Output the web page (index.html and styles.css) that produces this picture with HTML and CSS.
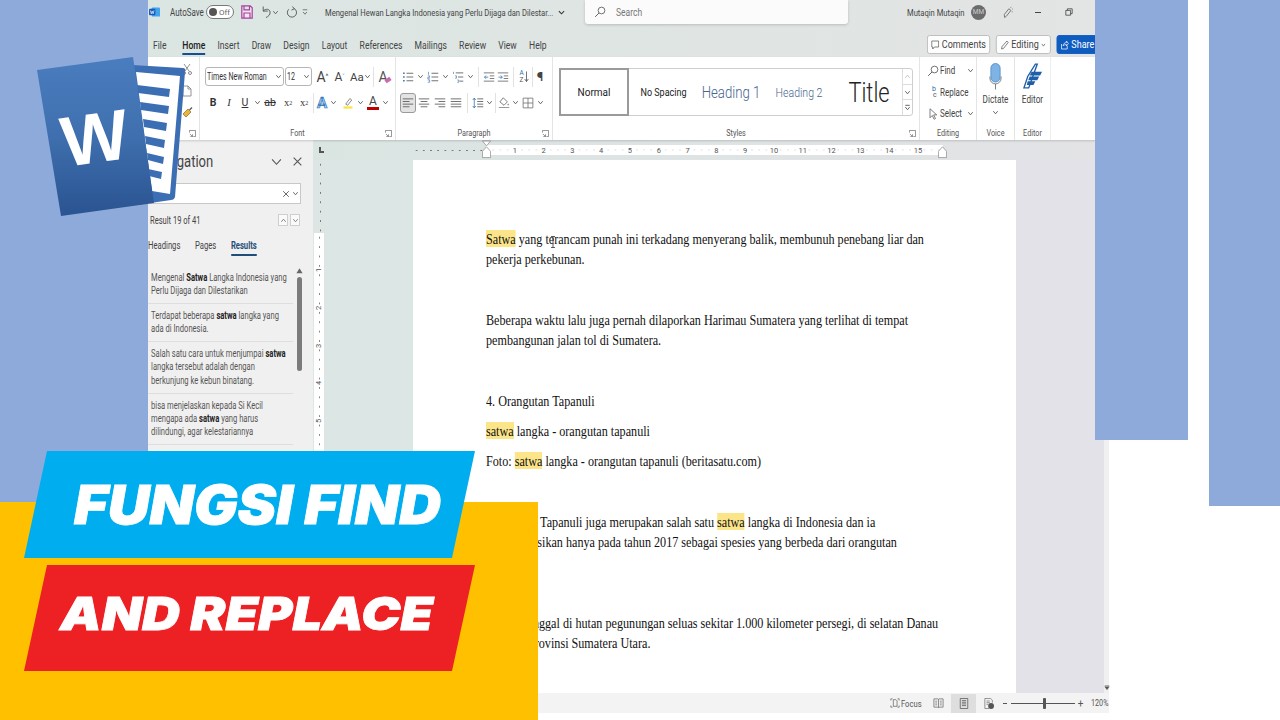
FILE: index.html
```html
<!DOCTYPE html>
<html lang="id">
<head>
    <meta charset="UTF-8">
    <meta name="viewport" content="width=device-width, initial-scale=1.0">
    <title>Fungsi Find and Replace</title>
    <link rel="stylesheet" href="styles.css">
</head>
<body>
<svg class="defs" width="0" height="0">
    <symbol id="i-chev" viewBox="0 0 8 8"><path d="M1.5 2.5 4 5.5l2.5-3" fill="none" stroke="#555" stroke-width="1"/></symbol>
    <symbol id="i-launch" viewBox="0 0 8 8"><path d="M.5 3V.5H7.5V7.5H5M1 4.5 4 7.500M4 5v2.500H1.500" fill="none" stroke="#666" stroke-width=".8"/></symbol>
    <symbol id="i-bullets" viewBox="0 0 16 16"><path d="M6 3h9M6 8h9M6 13h9" stroke="#555" stroke-width="1.100"/><path d="M1.500 3h2M1.500 8h2M1.500 13h2" stroke="#2b6cb0" stroke-width="2"/></symbol>
    <symbol id="i-numbers" viewBox="0 0 16 16"><path d="M6 3h9M6 8h9M6 13h9" stroke="#555" stroke-width="1.100"/><path d="M2 1v4M1 6.500h2.500v2H1v2h3M1 12h2.500v3H1" fill="none" stroke="#2b6cb0" stroke-width=".8"/></symbol>
    <symbol id="i-multi" viewBox="0 0 16 16"><path d="M5 2.500h10M8 8h7M10 13.500h5" stroke="#555" stroke-width="1.100"/><path d="M2 1v3M4 6.500h2v3H4M7 12h2v3H7" fill="none" stroke="#2b6cb0" stroke-width=".8"/></symbol>
    <symbol id="i-outdent" viewBox="0 0 16 16"><path d="M1 2.500h14M9 6.500h6M9 10h6M1 13.500h14" stroke="#555" stroke-width="1"/><path d="M7 8.200H2M4 6 2 8.200 4 10.400" fill="none" stroke="#2b6cb0" stroke-width="1"/></symbol>
    <symbol id="i-indent" viewBox="0 0 16 16"><path d="M1 2.500h14M9 6.500h6M9 10h6M1 13.500h14" stroke="#555" stroke-width="1"/><path d="M2 8.200h5M5 6l2 2.200-2 2.200" fill="none" stroke="#2b6cb0" stroke-width="1"/></symbol>
    <symbol id="i-left" viewBox="0 0 16 16"><path d="M1 2.500h14M1 6h9M1 9.500h14M1 13h9" stroke="#555" stroke-width="1.100"/></symbol>
    <symbol id="i-center" viewBox="0 0 16 16"><path d="M1 2.500h14M3.500 6h9M1 9.500h14M3.500 13h9" stroke="#555" stroke-width="1.100"/></symbol>
    <symbol id="i-right" viewBox="0 0 16 16"><path d="M1 2.500h14M6 6h9M1 9.500h14M6 13h9" stroke="#555" stroke-width="1.100"/></symbol>
    <symbol id="i-justify" viewBox="0 0 16 16"><path d="M1 2.500h14M1 6h14M1 9.500h14M1 13h14" stroke="#555" stroke-width="1.100"/></symbol>
    <symbol id="i-spacing" viewBox="0 0 16 16"><path d="M7 2.500h8M7 6h8M7 9.500h8M7 13h8" stroke="#555" stroke-width="1.100"/><path d="M3 1.500v13M1 4l2-2.500L5 4M1 12l2 2.500L5 12" fill="none" stroke="#2b6cb0" stroke-width="1"/></symbol>
    <symbol id="i-shade" viewBox="0 0 16 16"><path d="M7 1 12.500 6.500 8 11 2.500 6.500z" fill="none" stroke="#555" stroke-width="1"/><path d="M13.500 8.500c1 1.500 1 2.500 0 2.500s-1-1 0-2.500z" fill="#555"/><path d="M1 14h14" stroke="#999" stroke-width="1.400"/></symbol>
    <symbol id="i-borders" viewBox="0 0 16 16"><path d="M1.500 1.500h13v13h-13zM8 1.500v13M1.500 8h13" fill="none" stroke="#666" stroke-width="1"/></symbol>
    <symbol id="i-find" viewBox="0 0 16 16"><circle cx="10" cy="6" r="4.500" fill="none" stroke="#555" stroke-width="1.100"/><path d="M6.700 9.300 1.500 14.500" stroke="#555" stroke-width="1.200"/></symbol>
    <symbol id="i-select" viewBox="0 0 16 16"><path d="M4 1v12l3-3 2.500 5 1.800-1-2.500-4.800H13z" fill="none" stroke="#555" stroke-width="1"/></symbol>
</svg>

<div class="stage">
    <div class="word-window">
        <div class="titlebar">
            <svg class="mini-word" viewBox="0 0 12 12"><rect x="3" y="1" width="9" height="10" rx="1" fill="#41a5ee"/><rect x="0" y="2.500" width="7" height="7" rx="1" fill="#185abd"/><path d="M1.500 4.200 2.500 8l1-3 1 3 1-3.800" fill="none" stroke="#fff" stroke-width=".7"/></svg>
            <span class="tb-label">AutoSave</span>
            <span class="toggle"><i></i>Off</span>
            <svg class="tb-save" viewBox="0 0 12 14"><path d="M.8.800h8.400l2 2v10.400H.8zM3 .8v4h5.500v-4M3 13v-5h6v5" fill="#f4e3f0" stroke="#a7419a" stroke-width="1.200"/></svg>
            <svg class="tb-undo" viewBox="0 0 12 14"><path d="M3.500 1v5h5M3.500 6C6 3 10.500 3.500 11 7c.3 3-2 5-4.500 6" fill="none" stroke="#555" stroke-width="1"/></svg>
            <svg class="tb-chev"><use href="#i-chev"/></svg>
            <svg class="tb-redo" viewBox="0 0 12 14"><path d="M7 1 9 3.500 6 5M8.500 3A5 5 0 1 1 3 4" fill="none" stroke="#555" stroke-width="1"/></svg>
            <svg class="tb-qat" viewBox="0 0 8 10"><path d="M1 2h6M1.500 5 4 8l2.500-3" fill="none" stroke="#555" stroke-width="1"/></svg>
            <span class="doc-title">Mengenal Hewan Langka Indonesia yang Perlu Dijaga dan Dilestar...</span>
            <svg class="title-chev" viewBox="0 0 8 8"><path d="M1 2.500 4 5.500l3-3" fill="none" stroke="#333" stroke-width="1.200"/></svg>
            <div class="search-box">
                <svg class="search-ic" viewBox="0 0 16 16"><use href="#i-find"/></svg>
                <span>Search</span>
            </div>
            <span class="user-name">Mutaqin Mutaqin</span>
            <span class="avatar">MM</span>
            <svg class="tb-pen" viewBox="0 0 12 14"><path d="M2 13 1.500 9.500 7 2.500l2.500 2L4 11.500zM9 1l1-.5M11 3l.8-.5M10.500 6l1 .3" fill="none" stroke="#555" stroke-width=".9"/></svg>
            <span class="tb-min"></span>
            <svg class="tb-restore" viewBox="0 0 10 10"><path d="M1 3h6v6H1zM3 3V1h6v6H7" fill="none" stroke="#444" stroke-width="1"/></svg>
        </div>

        <div class="tabsbar">
            <div class="tab-list">
                <span class="tab tab-file">File</span>
                <span class="tab tab-active">Home</span>
                <span class="tab">Insert</span>
                <span class="tab">Draw</span>
                <span class="tab">Design</span>
                <span class="tab">Layout</span>
                <span class="tab">References</span>
                <span class="tab">Mailings</span>
                <span class="tab">Review</span>
                <span class="tab">View</span>
                <span class="tab">Help</span>
            </div>
            <div class="tab-actions">
                <span class="pill pill-comments">
                    <svg viewBox="0 0 10 10"><path d="M.8 1h8.400v6H4L2 9V7H.8z" fill="none" stroke="#555" stroke-width=".8"/></svg>Comments
                </span>
                <span class="pill pill-editing">
                    <svg viewBox="0 0 10 10"><path d="M1 9 1.500 6.500 7.500 1 9 2.500 3.200 8.500z" fill="none" stroke="#555" stroke-width=".8"/></svg>Editing<svg class="pill-chev"><use href="#i-chev"/></svg>
                </span>
                <span class="pill pill-share">
                    <svg viewBox="0 0 10 10"><path d="M1 4v5h7V6M3 6c0-2 2-3.500 4-3.500V1l2.500 2.500L7 6V4.500C5 4.500 4 5 3 6z" fill="none" stroke="#fff" stroke-width=".8"/></svg>Share
                </span>
            </div>
        </div>

        <div class="ribbon">
            <section class="group group-clipboard">
                <div class="clip-icons">
                    <svg viewBox="0 0 12 12"><path d="M3 1l5 7M9 1 4 8" stroke="#888" fill="none" stroke-width=".9"/><circle cx="3" cy="10" r="1.500" fill="none" stroke="#888"/><circle cx="9" cy="10" r="1.500" fill="none" stroke="#888"/></svg>
                    <svg viewBox="0 0 12 12"><path d="M2 1h5l3 3v7H2zM7 1v3h3" fill="none" stroke="#888" stroke-width=".9"/></svg>
                    <svg viewBox="0 0 12 12"><path d="M2 7 7 2l3 3-5 5z" fill="#e8b33f" stroke="#8a6a1f" stroke-width=".7"/><path d="M8.500 3 11 .5" stroke="#555" stroke-width="1.200"/></svg>
                </div>
                <svg class="launcher"><use href="#i-launch"/></svg>
            </section>

            <section class="group group-font">
                <div class="rows">
                    <div class="row">
                        <span class="combo combo-font"><span>Times New Roman</span><svg><use href="#i-chev"/></svg></span>
                        <span class="combo combo-size"><span>12</span><svg><use href="#i-chev"/></svg></span>
                        <span class="cell big-a cell-grow">A<sup>^</sup></span>
                        <span class="cell big-a small-a">A<sup>˅</sup></span>
                        <span class="cell case-a">Aa<svg class="chev-inline"><use href="#i-chev"/></svg></span>
                        <span class="v-sep"></span>
                        <span class="cell clear-a">A<i></i></span>
                    </div>
                    <div class="row">
                        <span class="cell fmt"><b>B</b></span>
                        <span class="cell fmt"><em>I</em></span>
                        <span class="cell fmt"><u>U</u></span>
                        <svg class="chev"><use href="#i-chev"/></svg>
                        <span class="cell fmt strike">ab</span>
                        <span class="cell fmt push">x<sub>2</sub></span>
                        <span class="cell fmt">x<sup>2</sup></span>
                        <span class="v-sep sep-tight"></span>
                        <span class="cell tight effect-a">A</span>
                        <svg class="chev"><use href="#i-chev"/></svg>
                        <span class="cell push">
                            <svg class="ic" viewBox="0 0 16 16"><path d="M5 9.500 10.500 2l2.500 2-5.500 7z" fill="none" stroke="#666" stroke-width="1"/><rect x="2" y="12.500" width="12" height="3" fill="#f5e642"/></svg>
                        </span>
                        <svg class="chev"><use href="#i-chev"/></svg>
                        <span class="cell color-a">A<i></i></span>
                        <svg class="chev"><use href="#i-chev"/></svg>
                    </div>
                </div>
                <div class="group-label">Font</div>
                <svg class="launcher"><use href="#i-launch"/></svg>
            </section>

            <section class="group group-para">
                <div class="rows">
                    <div class="row">
                        <span class="cell"><svg class="ic"><use href="#i-bullets"/></svg></span>
                        <svg class="chev"><use href="#i-chev"/></svg>
                        <span class="cell"><svg class="ic"><use href="#i-numbers"/></svg></span>
                        <svg class="chev"><use href="#i-chev"/></svg>
                        <span class="cell"><svg class="ic"><use href="#i-multi"/></svg></span>
                        <svg class="chev"><use href="#i-chev"/></svg>
                        <span class="v-sep"></span>
                        <span class="cell tight"><svg class="ic"><use href="#i-outdent"/></svg></span>
                        <span class="cell tight"><svg class="ic"><use href="#i-indent"/></svg></span>
                        <span class="v-sep"></span>
                        <span class="cell tight sort-ic"><span class="sort-az"><i>A</i><i>Z</i></span><svg viewBox="0 0 6 14"><path d="M3 1v12M.8 10 3 13l2.200-3" fill="none" stroke="#555" stroke-width="1"/></svg></span>
                        <span class="v-sep sep-tight"></span>
                        <span class="cell pilcrow">¶</span>
                    </div>
                    <div class="row">
                        <span class="cell cell-active"><svg class="ic"><use href="#i-left"/></svg></span>
                        <span class="cell"><svg class="ic"><use href="#i-center"/></svg></span>
                        <span class="cell"><svg class="ic"><use href="#i-right"/></svg></span>
                        <span class="cell"><svg class="ic"><use href="#i-justify"/></svg></span>
                        <span class="v-sep"></span>
                        <span class="cell tight"><svg class="ic"><use href="#i-spacing"/></svg></span>
                        <svg class="chev"><use href="#i-chev"/></svg>
                        <span class="v-sep sep-tight"></span>
                        <span class="cell tight"><svg class="ic"><use href="#i-shade"/></svg></span>
                        <svg class="chev"><use href="#i-chev"/></svg>
                        <span class="cell"><svg class="ic"><use href="#i-borders"/></svg></span>
                        <svg class="chev"><use href="#i-chev"/></svg>
                    </div>
                </div>
                <div class="group-label">Paragraph</div>
                <svg class="launcher"><use href="#i-launch"/></svg>
            </section>

            <section class="group group-styles">
                <div class="gallery">
                    <span class="style style-normal">Normal</span>
                    <span class="style style-nospace">No Spacing</span>
                    <span class="style style-h1">Heading 1</span>
                    <span class="style style-h2">Heading 2</span>
                    <span class="style style-title">Title</span>
                    <div class="gallery-arrows">
                        <span><svg viewBox="0 0 8 8"><path d="M1.500 5.500 4 2.500l2.500 3" fill="none" stroke="#bbb"/></svg></span>
                        <span><svg viewBox="0 0 8 8"><use href="#i-chev"/></svg></span>
                        <span><svg viewBox="0 0 8 8"><path d="M1.500 1.500h5M1.500 3.500 4 6.500l2.500-3" fill="none" stroke="#555"/></svg></span>
                    </div>
                </div>
                <div class="group-label">Styles</div>
                <svg class="launcher"><use href="#i-launch"/></svg>
            </section>

            <section class="group group-editing">
                <div class="edit-list">
                    <div class="edit-item"><svg class="ic"><use href="#i-find"/></svg><span>Find</span><svg class="chev edit-chev"><use href="#i-chev"/></svg></div>
                    <div class="edit-item"><span class="replace-ic"><i>b</i><i>c</i></span><span>Replace</span></div>
                    <div class="edit-item"><svg class="ic"><use href="#i-select"/></svg><span>Select</span><svg class="chev"><use href="#i-chev"/></svg></div>
                </div>
                <div class="group-label">Editing</div>
            </section>

            <section class="group group-voice">
                <svg class="mic" viewBox="0 0 14 28"><rect x="2" y="0" width="10" height="20" rx="5" fill="#7fb2e5" stroke="#3f85c8" stroke-width=".8"/><path d="M1 14v2a6 6 0 0 0 12 0v-2M7 22v6" fill="none" stroke="#777" stroke-width="1"/></svg>
                <div class="big-label">Dictate</div>
                <svg class="chev big-chev"><use href="#i-chev"/></svg>
                <div class="group-label">Voice</div>
            </section>

            <section class="group group-editor">
                <svg class="editor-ic" viewBox="0 0 22 28"><path d="M2 26 6 14 14 1h2L7 26z" fill="none" stroke="#1f5fa8" stroke-width="1.400"/><path d="M10 9h11l-2 4H8zM8 14h10l-2 4H6.500zM6 19h8l-2 4H5z" fill="#1f5fa8"/></svg>
                <div class="big-label">Editor</div>
                <div class="group-label">Editor</div>
            </section>
        </div>

        <div class="workspace">
            <aside class="nav-pane">
                <div class="nav-head">
                    <h2>Navigation</h2>
                    <svg viewBox="0 0 10 10"><path d="M1 3l4 4.500L9 3" fill="none" stroke="#555"/></svg>
                    <svg viewBox="0 0 10 10"><path d="M1.500 1.500l7 7M8.500 1.500l-7 7" fill="none" stroke="#555"/></svg>
                </div>
                <div class="nav-search">
                    <svg viewBox="0 0 10 10"><path d="M1.500 1.500l7 7M8.500 1.500l-7 7" fill="none" stroke="#444"/></svg>
                    <svg class="nav-search-chev"><use href="#i-chev"/></svg>
                </div>
                <div class="nav-count">
                    <span class="nav-count-text">Result 19 of 41</span>
                    <span class="nav-arrows">
                        <i><svg viewBox="0 0 8 8"><path d="M1.500 5.500 4 2.500l2.500 3" fill="none" stroke="#777"/></svg></i>
                        <i><svg viewBox="0 0 8 8"><path d="M1.500 2.500 4 5.500l2.500-3" fill="none" stroke="#777"/></svg></i>
                    </span>
                </div>
                <div class="nav-tabs">
                    <span>Headings</span>
                    <span>Pages</span>
                    <span class="nav-tab-on">Results</span>
                </div>
                <div class="nav-body">
                    <ul class="results">
                        <li>Mengenal <b>Satwa</b> Langka Indonesia yang<br>Perlu Dijaga dan Dilestarikan</li>
                        <li>Terdapat beberapa <b>satwa</b> langka yang<br>ada di Indonesia.</li>
                        <li>Salah satu cara untuk menjumpai <b>satwa</b><br>langka tersebut adalah dengan<br>berkunjung ke kebun binatang.</li>
                        <li>bisa menjelaskan kepada Si Kecil<br>mengapa ada <b>satwa</b> yang harus<br>dilindungi, agar kelestariannya</li>
                    </ul>
                    <div class="nav-scroll">
                        <svg viewBox="0 0 8 8"><path d="M4 1.500 7.500 7h-7z" fill="#666"/></svg>
                        <span></span>
                    </div>
                </div>
            </aside>

            <div class="doc-side">
                <div class="h-ruler">
                    <span class="ruler-corner"></span>
                    <div class="ruler-off"></div>
                    <div class="ruler-on">
                        <span class="ruler-half"></span>
                        <span>1</span><span>2</span><span>3</span><span>4</span><span>5</span><span>6</span><span>7</span><span>8</span>
                        <span>9</span><span>10</span><span>11</span><span>12</span><span>13</span><span>14</span><span>15</span>
                        <svg class="marker marker-left" viewBox="0 0 10 20"><path d="M.5.500h9L5 6zM5 7l4.500 5v7H.5v-7z" fill="#fff" stroke="#888" stroke-width=".8"/></svg>
                        <svg class="marker marker-right" viewBox="0 0 10 20"><path d="M5 7l4.500 5v7H.5v-7z" fill="#fff" stroke="#888" stroke-width=".8"/></svg>
                    </div>
                </div>
                <div class="doc-area">
                    <div class="v-ruler">
                        <div class="v-off"></div>
                        <div class="v-on">
                            <span>1</span><span>2</span><span>3</span><span>4</span><span>5</span>
                        </div>
                    </div>
                    <div class="doc-margin"></div>
                    <main class="page">
                        <div class="page-text">
                            <p><mark>Satwa</mark> yang terancam punah ini terkadang menyerang balik, membunuh penebang liar dan pekerja perkebunan.</p>
                            <p class="para-gap">Beberapa waktu lalu juga pernah dilaporkan Harimau Sumatera yang terlihat di tempat pembangunan jalan tol di Sumatera.</p>
                            <p class="para-gap">4. Orangutan Tapanuli</p>
                            <p class="para-near"><mark>satwa</mark> langka - orangutan tapanuli</p>
                            <p class="para-near">Foto: <mark>satwa</mark> langka - orangutan tapanuli (beritasatu.com)</p>
                            <p class="para-gap">Orangutan Tapanuli juga merupakan salah satu <mark>satwa</mark> langka di Indonesia dan ia diklasifikasikan hanya pada tahun 2017 sebagai spesies yang berbeda dari orangutan Sumatra.</p>
                            <p class="para-gap">Mereka tinggal di hutan pegunungan seluas sekitar 1.000 kilometer persegi, di selatan Danau Toba, di provinsi Sumatera Utara.</p>
                        </div>
                    </main>
                    <div class="doc-right"></div>
                    <div class="doc-scroll"><svg viewBox="0 0 8 8"><path d="M1 2h6M1 3.500h6L4 7.500z" fill="#555" stroke="#555" stroke-width=".6"/></svg></div>
                </div>
            </div>
        </div>

        <footer class="statusbar">
            <svg class="st-focus" viewBox="0 0 12 12"><path d="M1 3V1h2M9 1h2v2M11 9v2H9M3 11H1V9" fill="none" stroke="#555" stroke-width=".8"/><path d="M4 2h3l1.500 1.500V10H4z" fill="none" stroke="#555" stroke-width=".8"/></svg>
            <span class="st-text">Focus</span>
            <svg class="st-read" viewBox="0 0 12 12"><path d="M1 1.500h4.500l.5.500.5-.500H11v9H6.500l-.5.500-.5-.500H1zM6 2v9M2.500 4h2M2.500 6h2M2.500 8h2M7.500 4h2M7.500 6h2M7.500 8h2" fill="none" stroke="#666" stroke-width=".8"/></svg>
            <span class="st-print-box"><svg viewBox="0 0 12 14"><path d="M1.500 1h9v12h-9zM3.500 3.500h5M3.500 5.500h5M3.500 7.500h5M3.500 9.500h5" fill="none" stroke="#555" stroke-width=".9"/></svg></span>
            <svg class="st-web" viewBox="0 0 12 14"><path d="M1 1h7l2 2v3M1 1v12h5M3 4h4M3 6h4M3 8h2" fill="none" stroke="#666" stroke-width=".8"/><circle cx="8.500" cy="10" r="3.500" fill="#555"/></svg>
            <span class="st-minus"></span>
            <span class="st-slider"><i></i></span>
            <span class="st-plus">+</span>
            <span class="st-zoom">120%</span>
        </footer>
    </div>

    <div class="side-left"></div>
    <div class="side-mid"></div>
    <div class="side-right"></div>

    <svg class="cursor-beam" viewBox="0 0 6 12"><path d="M1 .5h4M3 .5v11M1 11.500h4" fill="none" stroke="#333" stroke-width=".8"/></svg>

    <div class="yellow-block"></div>
    <div class="banner banner-blue"><span>FUNGSI FIND</span></div>
    <div class="banner banner-red"><span>AND REPLACE</span></div>

    <svg class="word-logo" viewBox="0 0 160 170">
        <defs>
            <linearGradient id="cover" x1="0" y1="0" x2="0" y2="1">
                <stop offset="0" stop-color="#4a7dbf"/>
                <stop offset=".5" stop-color="#3f6fae"/>
                <stop offset="1" stop-color="#2a5391"/>
            </linearGradient>
        </defs>
        <path d="M95 8 146 11Q149 11 148 15L138 140Q137 143 134 143L100 148z" fill="#3c6eb4"/>
        <path d="M99 15 143 19 133 137 115 134z" fill="#fff"/>
        <path d="M100 28 133 32 132 40 101 36zM103 45 132 49 131 57 104 53zM106 62 130 66 129 74 107 70zM108 79 128 83 127 91 109 87zM110 96 127 100 126 107 111 103zM111 112 125 115 124 122 112 119z" fill="#3c6eb4"/>
        <path d="M0 13 96 0 117 146 24 159z" fill="url(#cover)"/>
        <text class="logo-w" transform="translate(28 110) rotate(-8)">W</text>
    </svg>
</div>
</body>
</html>
```

FILE: styles.css
```css
* { box-sizing: border-box; }
html, body { margin: 0; padding: 0; background: #fff; }
body { font-family: Roboto, "Noto Sans", sans-serif; color: #444; }
.defs { position: absolute; }
.stage { position: relative; width: 1280px; height: 720px; overflow: hidden; background: #fff; }

/* blue slide panels around the screenshot */
.side-left { position: absolute; left: 0; top: 0; width: 148px; height: 502px; background: #8eaadb; }
.side-mid { position: absolute; left: 1095px; top: 0; width: 93px; height: 440px; background: #8eaadb; }
.side-right { position: absolute; left: 1209px; top: 0; width: 71px; height: 506px; background: #8eaadb; }

/* word window, the capture is squeezed sideways so most text gets a scaleX */
.word-window { position: absolute; left: 148px; top: 0; width: 961px; height: 713px; isolation: isolate; display: flex; flex-direction: column; background: linear-gradient(90deg, #dbe6e3 0%, #e3e4e4 100%); }
.word-window svg { flex: none; }

.titlebar { height: 24px; display: flex; align-items: center; padding-left: 1px; font-size: 10px; color: #444; }
.mini-word { width: 11px; height: 12px; }
.tb-label { width: 32px; margin-left: 10px; white-space: nowrap; transform: scaleX(.8); transform-origin: 0 50%; }
.toggle { width: 28px; height: 14px; margin-left: 4px; border: 1px solid #777; border-radius: 8px; background: #fff; display: flex; align-items: center; gap: 2px; padding-left: 2px; font-size: 8px; color: #666; }
.toggle i { width: 8px; height: 8px; border-radius: 50%; background: #555; }
.tb-save { width: 12px; height: 14px; margin-left: 7px; }
.tb-undo { width: 11px; height: 14px; margin-left: 7px; }
.tb-chev { width: 7px; height: 7px; margin-left: 1px; }
.tb-redo { width: 11px; height: 14px; margin-left: 7px; }
.tb-qat { width: 6px; height: 8px; margin-left: 5px; }
.doc-title { width: 230px; margin-left: 17px; white-space: nowrap; font-size: 9.500px; transform: scaleX(.8); transform-origin: 0 50%; }
.title-chev { width: 7px; height: 7px; margin-left: 3px; }
.search-box { width: 263px; height: 24px; margin-left: 20px; background: #fbfbfb; border-radius: 0 0 3px 3px; box-shadow: 0 1px 3px rgba(0,0,0,.18); display: flex; align-items: center; padding-left: 9px; gap: 10px; color: #777; }
.search-box span { transform: scaleX(.85); transform-origin: 0 50%; }
.search-ic { width: 12px; height: 12px; }
.user-name { width: 58px; margin-left: 59px; white-space: nowrap; font-size: 9.500px; transform: scaleX(.8); transform-origin: 0 50%; }
.avatar { width: 15px; height: 15px; margin-left: 6px; border-radius: 50%; background: #6b6b6b; color: #ccc; font-size: 6.500px; display: flex; align-items: center; justify-content: center; }
.tb-pen { width: 10px; height: 13px; margin-left: 17px; }
.tb-min { width: 6px; height: 1px; margin-left: 22px; background: #444; }
.tb-restore { width: 8px; height: 8px; margin-left: 24px; }

.tabsbar { height: 33px; position: relative; font-size: 10.500px; }
.tab-list { position: absolute; left: 5px; top: 15px; display: flex; gap: 15px; transform: scaleX(.815); transform-origin: 0 0; white-space: nowrap; }
.tab { position: relative; }
.tab-file { width: 21px; }
.tab-active { font-weight: 500; color: #222; }
.tab-active::after { content: ""; position: absolute; left: 0; right: 0; top: 14px; height: 2px; background: #1a4f8f; }
.tab-actions { position: absolute; left: 779px; top: 11px; display: flex; gap: 7px; transform: scaleX(.82); transform-origin: 0 0; }
.pill { height: 19px; display: flex; align-items: center; justify-content: center; gap: 3px; border: 1px solid #b9b9b9; border-radius: 3px; background: #fdfdfd; font-size: 11px; white-space: nowrap; }
.pill svg { width: 10px; height: 10px; }
.pill .pill-chev { width: 6px; height: 6px; }
.pill-comments { width: 77px; }
.pill-editing { width: 67px; }
.pill-share { width: 54px; background: #0f5cc0; border-color: #0f5cc0; color: #fff; justify-content: flex-start; padding-left: 4px; border-radius: 3px 0 0 3px; }

/* ribbon */
.ribbon { height: 83px; display: flex; background: #fff; box-shadow: 0 1px 2px rgba(0,0,0,.16); position: relative; z-index: 2; }
.group { position: relative; flex: none; border-right: 1px solid #e4e4e4; font-size: 10px; }
.group-label { position: absolute; left: 0; right: 0; bottom: 2px; text-align: center; font-size: 8.500px; color: #555; transform: scaleX(.85); }
.launcher { position: absolute; right: 3px; bottom: 3px; width: 7px; height: 7px; }
.group-clipboard { width: 52px; }
.clip-icons { position: absolute; left: 33px; top: 0; display: flex; flex-direction: column; gap: 10px; padding-top: 6px; }
.clip-icons svg { width: 12px; height: 12px; }
.group-font { width: 196px; }
.group-para { width: 157px; }
.group-para .rows { padding-left: 4px; }
.group-styles { width: 367px; }
.group-editing { width: 57px; }
.group-voice { width: 38px; }
.group-editor { width: 36px; border-right: 1px solid #eee; }

.rows { padding-top: 10px; display: flex; flex-direction: column; gap: 7px; padding-left: 5px; }
.row { display: flex; align-items: center; height: 19px; }
.cell { width: 16px; height: 19px; flex: none; display: flex; align-items: center; justify-content: center; position: relative; white-space: nowrap; }
.tight { width: 14px; }
.push { margin-left: 2px; }
.ic { width: 12px; height: 12px; }
.chev { width: 7px; height: 7px; margin: 0 1px; flex: none; }
.v-sep { width: 1px; height: 20px; margin: 0 3px; background: #e2e2e2; flex: none; }
.sep-tight { margin: 0 1px; }
.combo { height: 19px; flex: none; border: 1px solid #b5b5b5; border-radius: 3px; display: flex; align-items: center; justify-content: space-between; padding: 0 1px; font-size: 10px; color: #333; white-space: nowrap; }
.combo span { transform: scaleX(.71); transform-origin: 0 50%; width: 0; }
.combo svg { width: 7px; height: 7px; }
.combo-font { width: 79px; }
.combo-size { width: 27px; margin-left: 1px; margin-right: 4px; }
.big-a { font-size: 14px; }
.big-a sup { font-size: 7px; line-height: 0; }
.cell-grow { width: 13px; }
.small-a { font-size: 12px; width: 13px; margin-left: 4px; }
.case-a { width: 20px; margin-left: 4px; font-size: 11.500px; justify-content: flex-start; }
.chev-inline { width: 7px; height: 7px; }
.clear-a { font-size: 14px; color: #555; margin-left: -2px; }
.clear-a i { position: absolute; right: 0; bottom: 4px; width: 6px; height: 4px; background: #c86bb0; transform: rotate(-35deg); }
.fmt { font-size: 10.500px; color: #333; font-family: "Liberation Serif", serif; }
.fmt b { font-family: Roboto, sans-serif; }
.fmt u { font-family: Roboto, sans-serif; }
.fmt sub, .fmt sup { font-size: 6px; line-height: 0; }
.strike { text-decoration: line-through; font-family: Roboto, sans-serif; }
.effect-a { font-size: 15px; font-weight: 700; color: #a8cdf0; -webkit-text-stroke: .7px #2e75b6; }
.color-a { font-size: 12px; padding-bottom: 3px; color: #444; }
.color-a i { position: absolute; left: 2px; right: 2px; bottom: 2px; height: 3px; background: #c00000; }
.pilcrow { width: 12px; font-size: 13px; font-weight: 700; color: #444; }
.cell-active { background: #e3e3e3; border: 1px solid #9a9a9a; border-radius: 3px; height: 20px; }
.sort-ic { gap: 0; }
.sort-ic svg { width: 5px; height: 13px; }
.sort-az { display: flex; flex-direction: column; font-size: 6.500px; line-height: 6.500px; }
.sort-az i { font-style: normal; color: #2b6cb0; }
.sort-az i + i { color: #555; }

.gallery { position: absolute; left: 6px; top: 11px; width: 354px; height: 48px; border: 1px solid #cfcfcf; border-radius: 3px; display: flex; align-items: center; }
.style { flex: none; display: flex; justify-content: center; white-space: nowrap; color: #222; }
.style-normal { width: 70px; height: 48px; margin: -1px 0 -1px -1px; border: 2px solid #9a9a9a; align-items: center; font-size: 10px; }
.style-nospace { width: 69px; font-size: 10px; transform: scaleX(.9); }
.style-h1 { width: 66px; font-size: 16.500px; color: #46648f; font-weight: 300; transform: scaleX(.8); }
.style-h2 { width: 70px; font-size: 13.500px; color: #46648f; font-weight: 300; transform: scaleX(.78); }
.style-title { width: 40px; margin-left: 15px; font-size: 28px; font-weight: 300; color: #222; transform: scaleX(.78); }
.gallery-arrows { position: absolute; right: 0; top: 0; bottom: 0; width: 10px; border-left: 1px solid #ddd; display: flex; flex-direction: column; }
.gallery-arrows span { flex: 1; display: flex; align-items: center; justify-content: center; border-bottom: 1px solid #ddd; }
.gallery-arrows span:last-child { border-bottom: 0; }
.gallery-arrows svg { width: 7px; height: 7px; }

.edit-list { padding: 4px 0 0 7px; display: flex; flex-direction: column; gap: 2.500px; }
.edit-item { height: 19px; display: flex; align-items: center; font-size: 10px; white-space: nowrap; }
.edit-item span:not(.replace-ic) { width: 26px; transform: scaleX(.8); transform-origin: 0 50%; margin-left: 1px; }
.edit-chev { margin-left: 1px; }
.replace-ic { width: 12px; height: 12px; position: relative; font-size: 7px; color: #2b6cb0; flex: none; }
.replace-ic i { position: absolute; font-style: normal; left: 5px; top: -1px; }
.replace-ic i + i { left: 6px; top: 5px; color: #555; }

.mic { position: absolute; left: 12px; top: 6px; width: 13px; height: 27px; }
.big-label { position: absolute; left: 0; right: 0; top: 36px; text-align: center; font-size: 10.500px; transform: scaleX(.78); }
.big-chev { position: absolute; left: 14px; top: 52px; }
.editor-ic { position: absolute; left: 7px; top: 6px; width: 21px; height: 27px; }

/* lower part */
.workspace { flex: 1; display: flex; min-height: 0; }
.nav-pane { width: 165px; background: #f1f0f0; flex: none; font-size: 10.500px; overflow: hidden; }
.nav-head { height: 43px; display: flex; align-items: center; padding: 0 10px 0 3px; gap: 10px; }
.nav-head h2 { flex: 1; margin: 0; font-size: 16.500px; font-weight: 400; color: #444; transform: scaleX(.79); transform-origin: 0 50%; }
.nav-head svg { width: 11px; height: 11px; }
.nav-search { width: 151px; height: 21px; margin-left: 2px; background: #fff; border: 1px solid #c8c8c8; display: flex; align-items: center; justify-content: flex-end; padding-right: 1px; gap: 2px; }
.nav-search svg { width: 8px; height: 8px; }
.nav-search .nav-search-chev { width: 7px; height: 7px; }
.nav-count { height: 16px; margin-top: 8px; padding: 0 13px 0 2px; display: flex; align-items: center; justify-content: space-between; }
.nav-count-text { transform: scaleX(.72); transform-origin: 0 50%; }
.nav-arrows { display: flex; gap: 2px; }
.nav-arrows i { width: 10px; height: 12px; border: 1px solid #cfcfcf; background: #fafafa; display: flex; align-items: center; justify-content: center; }
.nav-arrows svg { width: 7px; height: 7px; }
.nav-tabs { height: 31px; margin-top: 7px; display: flex; gap: 20px; align-items: flex-start; padding-top: 4px; transform: scaleX(.73); transform-origin: 0 0; }
.nav-tab-on { position: relative; font-weight: 700; color: #1f4e79; }
.nav-tab-on::after { content: ""; position: absolute; left: 0; right: 0; top: 15px; height: 2px; background: #1f4e79; }
.nav-body { display: flex; }
.results { list-style: none; margin: 0 -46px 0 0; padding: 0; width: 191px; flex: none; font-size: 10px; line-height: 13.300px; color: #555; white-space: nowrap; transform: scaleX(.76); transform-origin: 0 0; }
.results li { padding: 5px 0 5.500px 4px; border-bottom: 1px solid #dedede; }
.results b { color: #222; }
.nav-scroll { width: 8px; margin-left: 2px; display: flex; flex-direction: column; align-items: center; margin-top: -1px; }
.nav-scroll svg { width: 7px; height: 7px; margin: 2px 0 3px; }
.nav-scroll span { width: 5px; height: 94px; border-radius: 3px; background: #7b7b7b; }

.doc-side { flex: 1; min-width: 0; display: flex; flex-direction: column; }
.h-ruler { height: 20px; display: flex; align-items: center; position: relative; background: linear-gradient(90deg, #dae5e2 0%, #dfe3e4 60%, #e3e3e6 100%); }
.ruler-corner { position: absolute; left: 6px; top: 7px; width: 5px; height: 6px; border-left: 2px solid #555; border-bottom: 2px solid #555; }
.ruler-off { width: 73px; height: 9px; margin-left: 100px; flex: none; background: radial-gradient(circle, #777 .6px, transparent .8px) 0 0 / 7.200px 9px repeat-x; }
.ruler-on { position: relative; width: 457px; height: 10px; flex: none; display: flex; align-items: center; background: #fff radial-gradient(circle, #888 .5px, transparent .7px) 3.600px 0 / 7.200px 10px repeat-x; font-size: 7.500px; color: #555; }
.ruler-on span { width: 28.800px; flex: none; text-align: center; text-shadow: 0 0 2px #fff, 0 0 2px #fff; }
.ruler-on .ruler-half { width: 14.400px; }
.marker { position: absolute; top: -5px; width: 9px; height: 19px; }
.marker-left { left: -4px; }
.marker-right { right: -4px; }
.doc-area { flex: 1; min-height: 0; display: flex; }
.v-ruler { width: 13px; flex: none; display: flex; flex-direction: column; padding-left: 1px; }
.v-off { height: 73px; background: radial-gradient(circle, #777 .6px, transparent .8px) center 0 / 9px 9.400px repeat-y; }
.v-on { width: 10px; flex: 1; background: #fff radial-gradient(circle, #888 .5px, transparent .7px) center 0 / 9px 9.400px repeat-y; padding-top: 18px; display: flex; flex-direction: column; font-size: 7.500px; color: #555; }
.v-on span { height: 37.800px; flex: none; display: flex; align-items: center; justify-content: center; transform: rotate(-90deg); }
.doc-margin { width: 87px; flex: none; background: #dce6e4; }
.page { width: 603px; flex: none; background: #fff; padding: 69px 0 0 73px; font-family: "Liberation Serif", "Times New Roman", serif; font-size: 15.200px; line-height: 20.200px; color: #111; overflow: hidden; }
.page-text { width: 571px; transform: scaleX(.8); transform-origin: 0 0; }
.page p { margin: 0; }
.page .para-gap { margin-top: 40.400px; }
.page .para-near { margin-top: 10.200px; }
.page mark { background: #fce588; color: #111; }
.doc-right { width: 88px; flex: none; background: #e3e2e8; }
.doc-scroll { width: 5px; flex: none; background: #f0f0f0; position: relative; }
.doc-scroll svg { position: absolute; left: 0; bottom: 3px; width: 6px; height: 6px; }

.statusbar { height: 20px; flex: none; background: #f3f3f3; display: flex; align-items: center; font-size: 9.500px; color: #555; padding-left: 742px; position: relative; }
.st-focus { width: 10px; height: 12px; }
.st-text { width: 17px; margin-left: 1px; white-space: nowrap; transform: scaleX(.8); transform-origin: 0 50%; }
.st-read { width: 11px; height: 12px; margin-left: 15px; }
.st-print-box { width: 25px; height: 19px; margin-left: 7px; background: #dedede; display: flex; align-items: center; justify-content: center; }
.st-print-box svg { width: 10px; height: 13px; }
.st-web { width: 10px; height: 13px; margin-left: 8px; }
.st-minus { width: 4px; height: 1px; margin-left: 9px; background: #555; }
.st-slider { position: relative; width: 64px; height: 1px; margin-left: 4px; background: #555; flex: none; }
.st-slider i { position: absolute; left: 32px; top: -5px; width: 3px; height: 11px; border-radius: 1px; background: #555; }
.st-plus { width: 7px; margin-left: 2px; text-align: center; font-size: 10px; }
.st-zoom { width: 17px; margin-left: 7px; white-space: nowrap; font-size: 9px; transform: scaleX(.8); transform-origin: 0 50%; }

.cursor-beam { position: absolute; left: 550px; top: 236px; width: 6px; height: 12px; }

/* thumbnail overlay */
.yellow-block { position: absolute; left: 0; top: 502px; width: 538px; height: 218px; background: #ffc000; }
.banner { position: absolute; left: 24px; width: 451px; display: flex; align-items: center; clip-path: polygon(23px 0, 100% 0, 428px 100%, 0 100%); color: #fff; font-family: Inter, Roboto, sans-serif; font-weight: 900; font-style: italic; white-space: nowrap; -webkit-text-stroke: .8px #fff; }
.banner span { transform-origin: 0 50%; }
.banner-blue { top: 451px; height: 107px; background: #00aeef; font-size: 53px; padding-left: 50px; }
.banner-blue span { transform: scaleX(1.09); }
.banner-red { top: 565px; height: 106px; background: #ed2024; font-size: 46px; padding: 0 0 10px 36px; }
.banner-red span { transform: scaleX(1.14); }
.word-logo { position: absolute; left: 37px; top: 57px; width: 160px; height: 170px; }
.logo-w { font-family: "Liberation Sans", Arial, sans-serif; font-weight: 700; font-size: 71px; fill: #fff; }
```
